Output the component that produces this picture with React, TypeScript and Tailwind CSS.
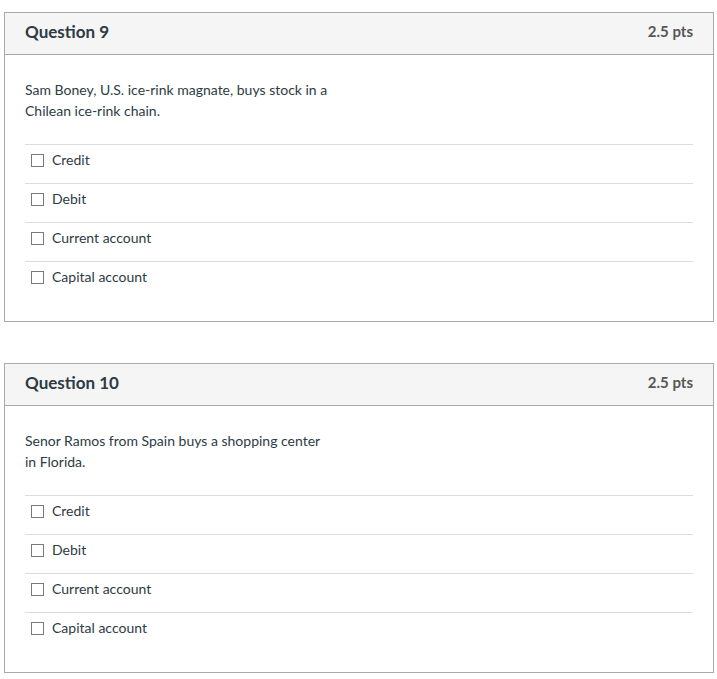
import React from "react";

interface Question {
  title: string;
  points: string;
  prompt: string;
  options: string[];
}

const questions: Question[] = [
  {
    title: "Question 9",
    points: "2.5 pts",
    prompt: "Sam Boney, U.S. ice-rink magnate, buys stock in a Chilean ice-rink chain.",
    options: ["Credit", "Debit", "Current account", "Capital account"],
  },
  {
    title: "Question 10",
    points: "2.5 pts",
    prompt: "Senor Ramos from Spain buys a shopping center in Florida.",
    options: ["Credit", "Debit", "Current account", "Capital account"],
  },
];

function QuestionCard({ q }: { q: Question }) {
  return (
    <div className="w-[710px] border border-[#a9a9a9] bg-white">
      <div className="flex h-[42px] items-center justify-between border-b border-[#a9a9a9] bg-[#f5f5f5] px-[20px] pb-[4px]">
        <h2 className="text-[17px] font-bold text-[#2d3b45]">{q.title}</h2>
        <span className="text-[15px] font-bold text-[#565656]">{q.points}</span>
      </div>
      <div className="px-[20px] pt-[24px] pb-[21px]">
        <p className="w-[306px] text-[14px] leading-[21px] text-[#2d3b45]">{q.prompt}</p>
        <div className="mt-[23px]">
          {q.options.map((opt) => (
            <label
              key={opt}
              className="flex items-center border-t border-[#dcdcdc] pt-[5px] pb-[13px] text-[14px] leading-[20px] text-[#2d3b45]"
            >
              <span className="ml-[6px] mr-[8px] h-[13px] w-[13px] border border-[#7a7a7a] bg-white" />
              {opt}
            </label>
          ))}
        </div>
      </div>
    </div>
  );
}

export default function App() {
  return (
    <div
      className="min-h-screen bg-white pt-[12px] pl-[4px]"
      style={{ fontFamily: "Lato, 'Liberation Sans', sans-serif" }}
    >
      <div className="flex flex-col gap-[41px]">
        {questions.map((q) => (
          <QuestionCard key={q.title} q={q} />
        ))}
      </div>
    </div>
  );
}
